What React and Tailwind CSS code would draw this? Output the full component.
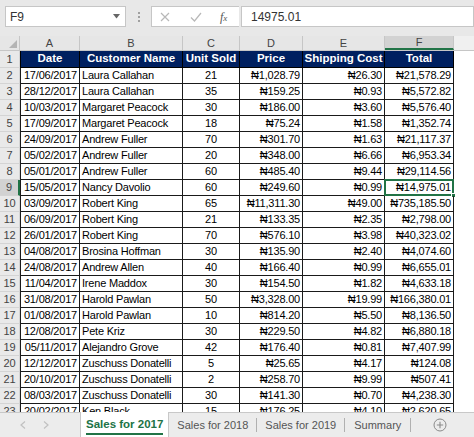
import React from "react";

const cols = [
  { key: "A", w: "w-[60px]", align: "justify-end" },
  { key: "B", w: "w-[103px]", align: "justify-start" },
  { key: "C", w: "w-[57px]", align: "justify-center" },
  { key: "D", w: "w-[63px]", align: "justify-end" },
  { key: "E", w: "w-[82px]", align: "justify-end" },
  { key: "F", w: "w-[69px]", align: "justify-end" },
];

const header = ["Date", "Customer Name", "Unit Sold", "Price", "Shipping Cost", "Total"];

const rows = [
  ["17/06/2017", "Laura Callahan", "21", "₦1,028.79", "₦26.30", "₦21,578.29"],
  ["28/12/2017", "Laura Callahan", "35", "₦159.25", "₦0.93", "₦5,572.82"],
  ["10/03/2017", "Margaret Peacock", "30", "₦186.00", "₦3.60", "₦5,576.40"],
  ["17/09/2017", "Margaret Peacock", "18", "₦75.24", "₦1.58", "₦1,352.74"],
  ["24/09/2017", "Andrew Fuller", "70", "₦301.70", "₦1.63", "₦21,117.37"],
  ["05/02/2017", "Andrew Fuller", "20", "₦348.00", "₦6.66", "₦6,953.34"],
  ["05/01/2017", "Andrew Fuller", "60", "₦485.40", "₦9.44", "₦29,114.56"],
  ["15/05/2017", "Nancy Davolio", "60", "₦249.60", "₦0.99", "₦14,975.01"],
  ["03/09/2017", "Robert King", "65", "₦11,311.30", "₦49.00", "₦735,185.50"],
  ["06/09/2017", "Robert King", "21", "₦133.35", "₦2.35", "₦2,798.00"],
  ["26/01/2017", "Robert King", "70", "₦576.10", "₦3.98", "₦40,323.02"],
  ["04/08/2017", "Brosina Hoffman", "30", "₦135.90", "₦2.40", "₦4,074.60"],
  ["24/08/2017", "Andrew Allen", "40", "₦166.40", "₦0.99", "₦6,655.01"],
  ["11/04/2017", "Irene Maddox", "30", "₦154.50", "₦1.82", "₦4,633.18"],
  ["31/08/2017", "Harold Pawlan", "50", "₦3,328.00", "₦19.99", "₦166,380.01"],
  ["01/08/2017", "Harold Pawlan", "10", "₦814.20", "₦5.50", "₦8,136.50"],
  ["12/08/2017", "Pete Kriz", "30", "₦229.50", "₦4.82", "₦6,880.18"],
  ["05/11/2017", "Alejandro Grove", "42", "₦176.40", "₦0.81", "₦7,407.99"],
  ["12/12/2017", "Zuschuss Donatelli", "5", "₦25.65", "₦4.17", "₦124.08"],
  ["20/10/2017", "Zuschuss Donatelli", "2", "₦258.70", "₦9.99", "₦507.41"],
  ["08/03/2017", "Zuschuss Donatelli", "30", "₦141.30", "₦0.70", "₦4,238.30"],
  ["20/02/2017", "Ken Black", "15", "₦176.25", "₦4.10", "₦2,620.65"],
];

function RowNum({ n, active, tall }) {
  return (
    <div
      className={`w-[20px] shrink-0 flex items-center justify-center border-b border-r border-[#d4d4d4] ${
        active ? "bg-[#d2d2d2] border-r-2 border-r-[#217346]" : "bg-[#e9e9e9]"
      } ${tall ? "h-[17px]" : "h-[16px]"} text-[#444]`}
    >
      {n}
    </div>
  );
}

export default function App() {
  return (
    <div
      className="w-[474px] h-[437px] overflow-hidden bg-white flex flex-col text-[11px] text-black"
      style={{ fontFamily: '"Liberation Sans", Arial, sans-serif' }}
    >
      {/* formula bar */}
      <div className="h-[36px] shrink-0 bg-[#e8e8e8] flex items-start pt-[6px] pl-[5px]">
        <div className="w-[121px] h-[21px] bg-white border border-[#c6c6c6] flex items-center pl-[4px] pr-[5px] text-[#333] text-[12px]">
          <span className="flex-1">F9</span>
          <svg width="7" height="5" viewBox="0 0 7 5">
            <path d="M0 0h7L3.5 4.5z" fill="#666" />
          </svg>
        </div>
        <div className="w-[25px] h-[21px] flex flex-col items-center justify-center gap-[2px]">
          <span className="w-[2px] h-[2px] bg-[#a0a0a0]" />
          <span className="w-[2px] h-[2px] bg-[#a0a0a0]" />
          <span className="w-[2px] h-[2px] bg-[#a0a0a0]" />
        </div>
        <div className="w-[88px] h-[21px] bg-white border border-r-0 border-[#c6c6c6] flex items-center">
          <svg className="ml-[8px]" width="10" height="10" viewBox="0 0 10 10">
            <path d="M1 1l8 8M9 1l-8 8" stroke="#b8b8b8" strokeWidth="1.2" />
          </svg>
          <svg className="ml-[20px]" width="12" height="10" viewBox="0 0 12 10">
            <path d="M1 5.5l3.5 3.5L11 1" stroke="#b8b8b8" strokeWidth="1.2" fill="none" />
          </svg>
          <span
            className="ml-[18px] italic text-[#555] text-[12px]"
            style={{ fontFamily: '"Liberation Serif", serif' }}
          >
            f<span className="text-[9px]">x</span>
          </span>
        </div>
        <div className="flex-1 h-[21px] bg-white border border-[#c6c6c6] ml-[2px] flex items-center pl-[9px] text-[12px] text-[#333]">
          14975.01
        </div>
      </div>

      {/* column headers */}
      <div className="h-[15px] shrink-0 flex bg-[#e6e6e6] text-[#444] border-b border-[#c6c6c6]">
        <div className="w-[20px] shrink-0 relative border-r border-[#c6c6c6]">
          <svg className="absolute right-[2px] bottom-[2px]" width="8" height="8" viewBox="0 0 8 8">
            <path d="M8 0v8H0z" fill="#b4b4b4" />
          </svg>
        </div>
        {cols.map((c) => (
          <div
            key={c.key}
            className={`${c.w} shrink-0 flex items-center justify-center border-r border-[#c6c6c6] ${
              c.key === "F" ? "bg-[#d2d2d2] border-b-2 border-b-[#217346]" : ""
            }`}
          >
            {c.key}
          </div>
        ))}
        <div className="flex-1 bg-[#f0f0f0]" />
      </div>

      {/* grid */}
      <div className="flex-1 overflow-hidden">
        <div className="flex">
          <RowNum n={1} tall />
          {header.map((h, i) => (
            <div
              key={h}
              className={`${cols[i].w} shrink-0 h-[17px] bg-[#002060] text-white font-bold text-[11.5px] flex items-center justify-center border-r border-b border-black ${
                i === 0 ? "border-l" : ""
              }`}
            >
              {h}
            </div>
          ))}
        </div>
        {rows.map((r, ri) => {
          const n = ri + 2;
          return (
            <div key={n} className="flex">
              <RowNum n={n} active={n === 9} />
              {r.map((v, i) => (
                <div
                  key={i}
                  className={`${cols[i].w} ${cols[i].align} shrink-0 h-[16px] flex items-center px-[2px] whitespace-nowrap tracking-[-0.2px] border-r border-b border-[#1a1a1a] relative ${
                    i === 0 ? "border-l" : ""
                  }`}
                >
                  {v}
                  {n === 9 && i === 5 && (
                    <>
                      <span className="absolute -left-px -top-px -right-px -bottom-px border-2 border-[#217346]" />
                      <span className="absolute -right-[3px] -bottom-[3px] w-[5px] h-[5px] bg-[#217346] border border-white" />
                    </>
                  )}
                </div>
              ))}
            </div>
          );
        })}
      </div>

      {/* sheet tabs */}
      <div className="h-[25px] shrink-0 bg-[#ececec] border-t border-[#c8c8c8] flex items-stretch text-[11px] text-[#555]">
        <div className="w-[80px] shrink-0 flex items-center pl-[20px] gap-[17px]">
          <svg width="6" height="8" viewBox="0 0 6 8">
            <path d="M5 0.5L1 4l4 3.5" stroke="#c0c0c0" strokeWidth="1.2" fill="none" />
          </svg>
          <svg width="6" height="8" viewBox="0 0 6 8">
            <path d="M1 0.5L5 4 1 7.5" stroke="#c0c0c0" strokeWidth="1.2" fill="none" />
          </svg>
        </div>
        <div className="-mt-px bg-white border-x border-[#c8c8c8] px-[5px] flex items-center">
          <span className="font-bold text-[11.5px] text-[#217346] border-b-2 border-[#217346] leading-[18px]">
            Sales for 2017
          </span>
        </div>
        <div className="px-[8px] flex items-center">Sales for 2018</div>
        <span className="w-px h-[14px] bg-[#b0b0b0] self-center" />
        <div className="px-[8px] flex items-center">Sales for 2019</div>
        <span className="w-px h-[14px] bg-[#b0b0b0] self-center" />
        <div className="px-[9px] flex items-center">Summary</div>
        <span className="w-px h-[14px] bg-[#b0b0b0] self-center" />
        <div className="flex-1 flex items-center justify-center pr-[6px]">
          <svg width="14" height="14" viewBox="0 0 14 14">
            <circle cx="7" cy="7" r="6" stroke="#8a8a8a" strokeWidth="1" fill="none" />
            <path d="M7 3.8v6.4M3.8 7h6.4" stroke="#8a8a8a" strokeWidth="1.1" />
          </svg>
        </div>
      </div>
    </div>
  );
}
